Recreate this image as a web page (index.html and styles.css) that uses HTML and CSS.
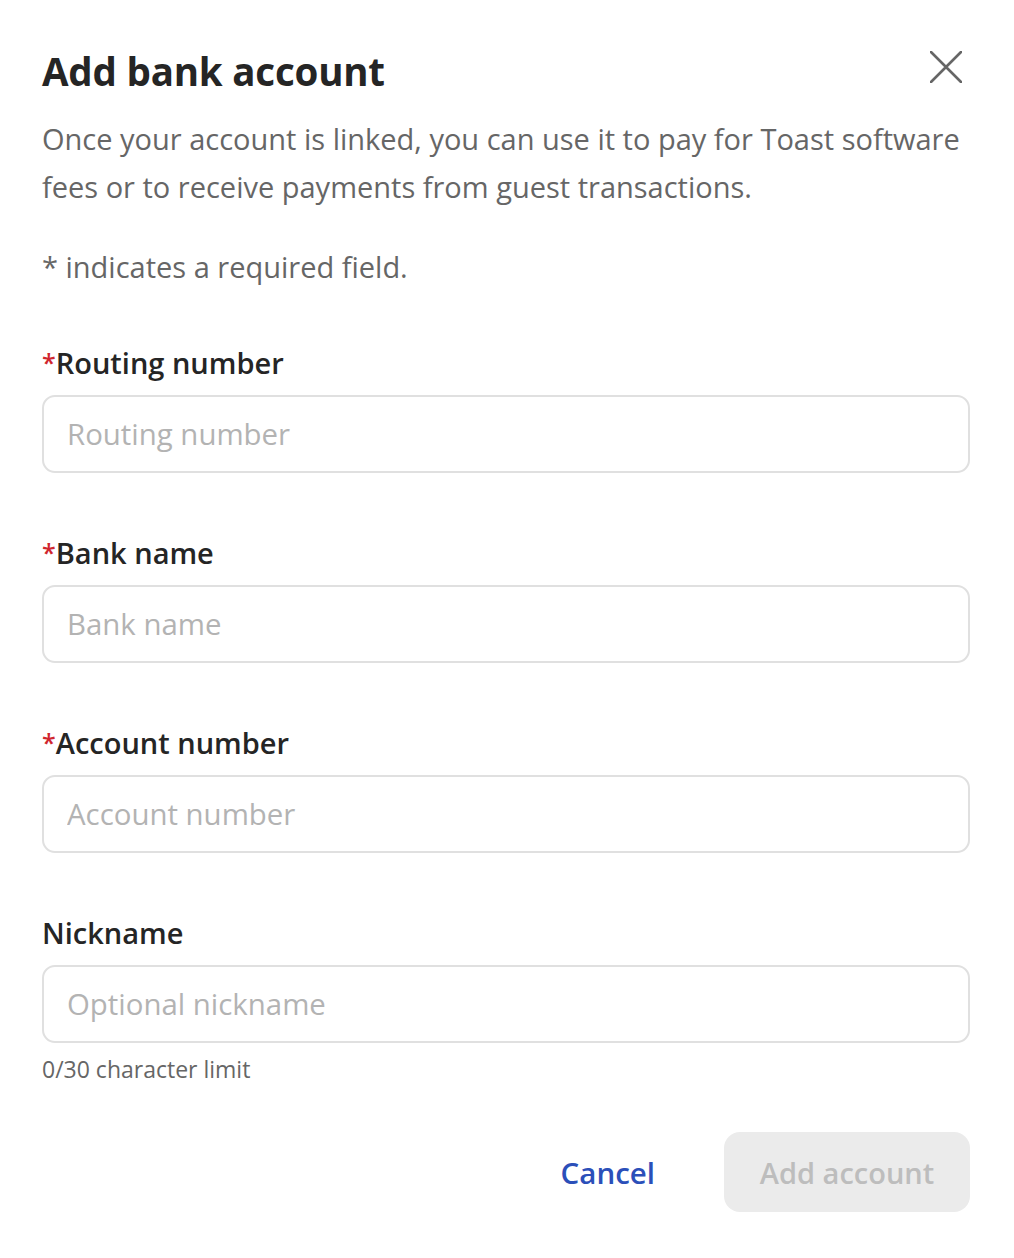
FILE: index.html
```html
<!DOCTYPE html>
<html lang="en">
<head>
<meta charset="utf-8">
<title>Add bank account</title>
<link rel="stylesheet" href="styles.css">
</head>
<body>
<div class="dialog">
  <div class="header">
    <h1 class="title">Add bank account</h1>
    <button class="close" aria-label="Close">
      <svg width="32" height="32" viewBox="0 0 32 32"><path d="M1 1 L31 31 M31 1 L1 31" stroke="#666" stroke-width="2.6" stroke-linecap="round" fill="none"/></svg>
    </button>
  </div>
  <p class="intro">Once your account is linked, you can use it to pay for Toast software fees or to receive payments from guest transactions.</p>
  <p class="note">* indicates a required field.</p>

  <div class="field">
    <label class="label"><span class="req">*</span>Routing number</label>
    <input class="input" type="text" placeholder="Routing number">
  </div>
  <div class="field">
    <label class="label"><span class="req">*</span>Bank name</label>
    <input class="input" type="text" placeholder="Bank name">
  </div>
  <div class="field">
    <label class="label"><span class="req">*</span>Account number</label>
    <input class="input" type="text" placeholder="Account number">
  </div>
  <div class="field">
    <label class="label">Nickname</label>
    <input class="input" type="text" placeholder="Optional nickname">
    <div class="helper">0/30 character limit</div>
  </div>

  <div class="footer">
    <button class="btn-cancel">Cancel</button>
    <button class="btn-add" disabled>Add account</button>
  </div>
</div>
</body>
</html>
```

FILE: styles.css
```css
* { box-sizing: border-box; }
html, body { margin: 0; padding: 0; background: #fff; }
body { font-family: "Open Sans", "Noto Sans", sans-serif; color: #252525; }

.dialog { padding: 47px 44px 0 42px; }

.header { display: flex; justify-content: space-between; align-items: flex-start; height: 48px; }
.title { margin: 0; font-size: 38.5px; line-height: 48px; font-weight: 700; color: #252525; letter-spacing: -0.2px; }
.close { border: 0; background: none; padding: 0; margin: 4px 8px 0 0; width: 32px; height: 32px; cursor: pointer; }
.close svg { display: block; }

.intro { margin: 20px 0 0; font-size: 29px; line-height: 48px; color: #666; }
.note { margin: 32px 0 0; font-size: 29px; line-height: 48px; color: #666; }

.field { margin-top: 52px; }
.field + .field { margin-top: 60px; }
.label { display: block; height: 40px; font-size: 29px; line-height: 40px; font-weight: 600; color: #252525; }
.req { color: #d0262e; font-size: 25px; line-height: 1; vertical-align: 2px; }
.input { display: block; width: 100%; height: 78px; margin-top: 12px; border: 2px solid #e0e0e0; border-radius: 13px; padding: 0 23px; font-family: inherit; font-size: 29.4px; color: #252525; background: #fff; outline: none; }
.input::placeholder { color: #b3b3b3; }
.helper { margin-top: 11px; font-size: 23px; line-height: 30px; color: #666; }

.footer { display: flex; justify-content: flex-end; align-items: center; margin-top: 48px; }
.btn-cancel { border: 0; background: none; height: 80px; padding: 0 24px; margin-right: 45px; font-family: inherit; font-size: 29.5px; font-weight: 600; color: #2b4fb9; cursor: pointer; }
.btn-add { border: 0; width: 246px; height: 80px; border-radius: 16px; background: #ebebeb; font-family: inherit; font-size: 29px; font-weight: 600; color: #bdbdbd; }
```
